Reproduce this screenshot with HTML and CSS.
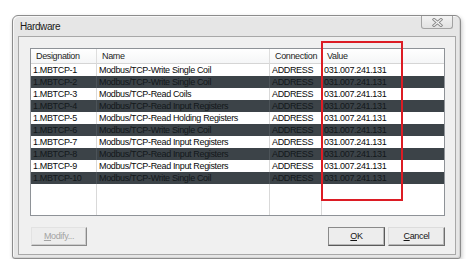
FILE: index.html
```html
<!DOCTYPE html>
<html>
<head>
<meta charset="utf-8">
<link rel="stylesheet" href="styles.css">
</head>
<body>
<div class="dialog">
  <div class="titlebar">
    <span class="title">Hardware</span>
    <div class="close">
      <svg width="11" height="9" viewBox="0 0 11 9">
        <path d="M2 1.5 L9 7.5 M9 1.5 L2 7.5" stroke="#8a8a8a" stroke-width="3" stroke-linecap="square" fill="none"/>
        <path d="M2 1.5 L9 7.5 M9 1.5 L2 7.5" stroke="#f4f4f4" stroke-width="1.2" stroke-linecap="square" fill="none"/>
      </svg>
    </div>
  </div>
  <div class="panel">
    <div class="lv">
      <div class="hrow">
        <div class="hc">Designation</div><div class="hc">Name</div><div class="hc">Connection</div><div class="hc last">Value</div>
      </div>
      <div class="row"><div class="c">1.MBTCP-1</div><div class="c">Modbus/TCP-Write Single Coil</div><div class="c">ADDRESS</div><div class="c last">031.007.241.131</div></div>
      <div class="row dark"><div class="c">1.MBTCP-2</div><div class="c">Modbus/TCP-Write Single Coil</div><div class="c">ADDRESS</div><div class="c last">031.007.241.131</div></div>
      <div class="row"><div class="c">1.MBTCP-3</div><div class="c">Modbus/TCP-Read Coils</div><div class="c">ADDRESS</div><div class="c last">031.007.241.131</div></div>
      <div class="row dark"><div class="c">1.MBTCP-4</div><div class="c">Modbus/TCP-Read Input Registers</div><div class="c">ADDRESS</div><div class="c last">031.007.241.131</div></div>
      <div class="row"><div class="c">1.MBTCP-5</div><div class="c">Modbus/TCP-Read Holding Registers</div><div class="c">ADDRESS</div><div class="c last">031.007.241.131</div></div>
      <div class="row dark"><div class="c">1.MBTCP-6</div><div class="c">Modbus/TCP-Write Single Coil</div><div class="c">ADDRESS</div><div class="c last">031.007.241.131</div></div>
      <div class="row"><div class="c">1.MBTCP-7</div><div class="c">Modbus/TCP-Read Input Registers</div><div class="c">ADDRESS</div><div class="c last">031.007.241.131</div></div>
      <div class="row dark"><div class="c">1.MBTCP-8</div><div class="c">Modbus/TCP-Read Input Registers</div><div class="c">ADDRESS</div><div class="c last">031.007.241.131</div></div>
      <div class="row"><div class="c">1.MBTCP-9</div><div class="c">Modbus/TCP-Read Input Registers</div><div class="c">ADDRESS</div><div class="c last">031.007.241.131</div></div>
      <div class="row dark"><div class="c">1.MBTCP-10</div><div class="c">Modbus/TCP-Write Single Coil</div><div class="c">ADDRESS</div><div class="c last">031.007.241.131</div></div>
      <div class="row filler"><div class="c"></div><div class="c"></div><div class="c"></div><div class="c last"></div></div>
    </div>
    <div class="buttons">
      <div class="btn disabled"><span class="u">M</span>odify...</div>
      <div class="spacer"></div>
      <div class="btn def"><span class="u">O</span>K</div>
      <div class="btn"><span class="u">C</span>ancel</div>
    </div>
  </div>
</div>
<div class="highlight"></div>
</body>
</html>
```
FILE: styles.css
```css
html, body {
  margin: 0;
  padding: 0;
  background: #ffffff;
}
body {
  padding: 15px 0 0 12px;
  font-family: "Liberation Sans", Arial, sans-serif;
  font-size: 9px;
  letter-spacing: -0.35px;
  color: #151515;
}
.dialog {
  box-sizing: border-box;
  width: 449px;
  height: 244px;
  border: 1px solid #8c8c8c;
  border-radius: 6px 6px 3px 3px;
  background: #e6e6e6;
  box-shadow: inset 1px 1px 0 #f7f7f7, inset -1px -1px 0 #d2d2d2, 1px 2px 4px rgba(0,0,0,0.22);
  padding: 0 4px 3px 5px;
  display: flex;
  flex-direction: column;
}
.titlebar {
  height: 20px;
  display: flex;
  justify-content: space-between;
  align-items: flex-start;
}
.title {
  padding: 4px 0 0 2px;
  font-size: 10px;
  letter-spacing: -0.4px;
  line-height: 13px;
  color: #1a1a1a;
}
.close {
  box-sizing: border-box;
  width: 32px;
  height: 13px;
  margin-right: 3px;
  border: 1px solid #a3a3a3;
  border-top: none;
  border-radius: 0 0 3px 3px;
  background: linear-gradient(#f3f3f3, #e2e2e2);
  display: flex;
  align-items: center;
  justify-content: center;
}
.panel {
  box-sizing: border-box;
  height: 219px;
  border: 1px solid #a8a8a8;
  background: #f0f0f0;
  padding: 11px 10px 8px 11px;
  display: flex;
  flex-direction: column;
}
.lv {
  box-sizing: border-box;
  height: 169px;
  border: 1px solid #8e9297;
  background: #ffffff;
  display: grid;
  grid-template-columns: 66px 173px 52px 1fr;
  grid-template-rows: 15px repeat(10, 12px) 1fr;
}
.hrow, .row {
  display: contents;
}
.hc {
  box-sizing: border-box;
  border-right: 1px solid #dedede;
  border-bottom: 1px solid #d5d5d5;
  background: linear-gradient(#ffffff, #f5f6f7);
  padding-left: 5px;
  line-height: 14px;
  color: #1e1e1e;
  white-space: nowrap;
  overflow: hidden;
}
.c {
  box-sizing: border-box;
  border-right: 1px solid #d9d9d9;
  padding-left: 2px;
  line-height: 12px;
  white-space: nowrap;
  overflow: hidden;
  color: #0a0a0a;
}
.c.last, .hc.last {
  border-right: none;
}
.dark .c {
  background: #3c4348;
  color: #13181b;
  border-right-color: #4c5358;
}
.filler .c {
  background: #ffffff;
}
.buttons {
  margin-top: 11px;
  display: flex;
  gap: 3px;
}
.spacer {
  flex: 1;
}
.btn {
  box-sizing: border-box;
  width: 57px;
  height: 19px;
  border: 1px solid;
  border-color: #dcdcdc #6f6f6f #6f6f6f #dcdcdc;
  background: #ededed;
  box-shadow: inset -1px -1px 0 #b8b8b8;
  text-align: center;
  line-height: 16px;
  color: #151515;
}
.btn.def {
  border-color: #8a8a8a #5a5a5a #5a5a5a #8a8a8a;
}
.btn.disabled {
  width: 56px;
  margin-left: 1px;
  color: #a3a3a3;
  border-color: #e2e2e2 #8a8a8a #8a8a8a #e2e2e2;
  box-shadow: inset -1px -1px 0 #cccccc;
}
.u {
  text-decoration: underline;
}
.highlight {
  position: absolute;
  left: 321px;
  top: 41px;
  width: 82px;
  height: 160px;
  box-sizing: border-box;
  border: 2px solid #dc1c24;
}
```
